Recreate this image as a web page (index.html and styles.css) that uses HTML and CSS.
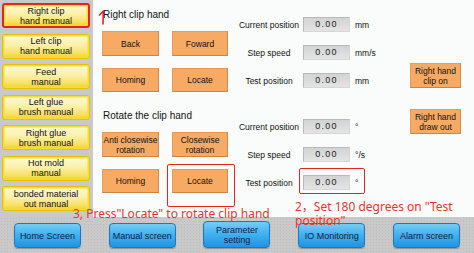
FILE: index.html
```html
<!DOCTYPE html>
<html>
<head>
<meta charset="utf-8">
<link rel="stylesheet" href="styles.css">
</head>
<body>
<div class="screen">
  <div class="top">
    <nav class="side">
      <div class="sbtn active">Right clip<br>hand manual</div>
      <div class="sbtn">Left clip<br>hand manual</div>
      <div class="sbtn">Feed<br>manual</div>
      <div class="sbtn">Left glue<br>brush manual</div>
      <div class="sbtn">Right glue<br>brush manual</div>
      <div class="sbtn">Hot mold<br>manual</div>
      <div class="sbtn">bonded material<br>out manual</div>
    </nav>
    <main class="main">
      <div class="col-ops">
        <div class="sec-title">Right clip hand</div>
        <div class="ops">
          <div class="obtn">Back</div>
          <div class="obtn">Foward</div>
          <div class="obtn">Homing</div>
          <div class="obtn">Locate</div>
        </div>
        <div class="sec-title">Rotate the clip hand</div>
        <div class="ops">
          <div class="obtn">Anti closewise<br>rotation</div>
          <div class="obtn">Closewise<br>rotation</div>
          <div class="obtn">Homing</div>
          <div class="obtn">Locate</div>
        </div>
      </div>
      <div class="col-fields">
        <div class="group g1">
          <div class="frow"><span class="lbl">Current position</span><span class="val">0.00</span><span class="unit">mm</span></div>
          <div class="frow"><span class="lbl">Step speed</span><span class="val">0.00</span><span class="unit">mm/s</span></div>
          <div class="frow"><span class="lbl">Test position</span><span class="val">0.00</span><span class="unit">mm</span></div>
        </div>
        <div class="group g2">
          <div class="frow"><span class="lbl">Current position</span><span class="val">0.00</span><span class="unit">°</span></div>
          <div class="frow"><span class="lbl">Step speed</span><span class="val">0.00</span><span class="unit">°/s</span></div>
          <div class="frow"><span class="lbl">Test position</span><span class="val">0.00</span><span class="unit">°</span></div>
        </div>
      </div>
      <div class="col-side">
        <div class="obtn small">Right hand<br>clip on</div>
        <div class="obtn small">Right hand<br>draw out</div>
      </div>
    </main>
  </div>
  <footer class="tabs">
    <div class="tab"><div class="bbtn">Home Screen</div></div>
    <div class="tab"><div class="bbtn">Manual screen</div></div>
    <div class="tab"><div class="bbtn tall">Parameter<br>setting</div></div>
    <div class="tab"><div class="bbtn">IO Monitoring</div></div>
    <div class="tab"><div class="bbtn">Alarm screen</div></div>
  </footer>

  <svg class="mark1" width="10" height="16" viewBox="0 0 10 16">
    <path d="M5 15 L5.3 2 L1.5 6" fill="none" stroke="#e52222" stroke-width="1.6" stroke-linecap="round" stroke-linejoin="round"/>
  </svg>
  <div class="rbox rb-locate"></div>
  <div class="rbox rb-test"></div>
  <div class="note n3">3, Press"Locate" to rotate clip hand</div>
  <div class="note n2">2，Set 180 degrees on "Test<br>position"</div>
</div>
</body>
</html>
```
FILE: styles.css
```css
html, body {
  margin: 0;
  padding: 0;
}
body {
  font-family: "Liberation Sans", Arial, sans-serif;
  color: #111;
  background: #fafcfb;
}
.screen {
  position: relative;
  width: 474px;
  height: 253px;
  overflow: hidden;
}
.top {
  display: flex;
  height: 217px;
}
.side {
  width: 93px;
  flex: none;
  background: #c9c9c9;
  padding: 3px 0 0 2px;
  box-sizing: border-box;
  display: flex;
  flex-direction: column;
  gap: 5.5px;
}
.sbtn {
  width: 88px;
  height: 25px;
  box-sizing: border-box;
  border-radius: 3px;
  border: 1px solid #e3c200;
  background: linear-gradient(#fdf9d8 0%, #fbf0a8 45%, #f7e165 80%, #f1cf12 100%);
  box-shadow: inset 0 0 0 1.5px #f6dc3a;
  font-size: 9px;
  line-height: 10px;
  text-align: center;
  display: flex;
  align-items: center;
  justify-content: center;
  color: #111;
}
.sbtn.active {
  border: 2px solid #e3261c;
}
.main {
  flex: 1;
  display: flex;
  background: #fafcfb;
}
.col-ops {
  margin-left: 9px;
  padding-top: 9px;
  width: 126px;
  flex: none;
}
.sec-title {
  font-size: 10px;
  line-height: 12px;
  height: 12px;
  margin-left: 1px;
  color: #111;
}
.ops {
  margin-top: 10px;
  display: grid;
  grid-template-columns: 57px 56px;
  grid-template-rows: 25px 24px;
  column-gap: 13px;
  row-gap: 12px;
  margin-bottom: 18px;
}
.obtn {
  background: #f7aa63;
  border: 1px solid #e9995a;
  border-bottom-color: #c98448;
  border-right-color: #cf8a4c;
  box-sizing: border-box;
  font-size: 8.5px;
  line-height: 10px;
  text-align: center;
  display: flex;
  align-items: center;
  justify-content: center;
  color: #111;
}
.col-fields {
  margin-left: 9px;
  width: 169px;
  flex: none;
}
.group {
  display: flex;
  flex-direction: column;
  gap: 13px;
}
.g1 { padding-top: 17px; }
.g2 { margin-top: 31px; }
.frow {
  display: flex;
  align-items: center;
  height: 15px;
}
.lbl {
  width: 64px;
  text-align: center;
  font-size: 8.5px;
  white-space: nowrap;
}
.val {
  margin-left: 2px;
  width: 47px;
  height: 15px;
  box-sizing: border-box;
  border: 1px solid #b9b9b9;
  border-right-color: #d6d6d6;
  border-bottom-color: #d6d6d6;
  background: linear-gradient(#d3d3d3, #e4e4e4);
  font-size: 9px;
  letter-spacing: 1.3px;
  line-height: 13px;
  text-align: center;
  color: #222;
}
.unit {
  margin-left: 5px;
  font-size: 8.5px;
}
.col-side {
  margin-left: 4px;
  padding-top: 63px;
  display: flex;
  flex-direction: column;
  gap: 21px;
}
.obtn.small {
  width: 51px;
  height: 25px;
  font-size: 8.5px;
}
.tabs {
  height: 36px;
  background-color: #c9c9c9;
  background-image: radial-gradient(#bdbdbd 0.6px, transparent 0.8px);
  background-size: 3px 3px;
  display: grid;
  grid-template-columns: repeat(5, 1fr);
  align-items: start;
}
.tab {
  display: flex;
  justify-content: center;
  padding-top: 6px;
}
.bbtn {
  width: 67px;
  height: 25px;
  box-sizing: border-box;
  border-radius: 4px;
  border: 1px solid #1f76bd;
  background: linear-gradient(#74cdf6 0%, #43b2ef 45%, #2094e2 100%);
  box-shadow: 0 1px 1px rgba(0,0,0,0.25);
  font-size: 9px;
  line-height: 10px;
  color: #0d1d45;
  text-align: center;
  display: flex;
  align-items: center;
  justify-content: center;
}
.bbtn.tall {
  height: 27px;
  margin-top: -2px;
}
.mark1 {
  position: absolute;
  left: 98px;
  top: 9px;
}
.rbox {
  position: absolute;
  border: 1.5px solid #e3261c;
  border-radius: 2px;
  box-sizing: border-box;
}
.rb-locate {
  left: 167px;
  top: 164px;
  width: 68px;
  height: 43px;
}
.rb-test {
  left: 299px;
  top: 168px;
  width: 66px;
  height: 26px;
}
.note {
  position: absolute;
  font-family: "Noto Sans", "Noto Sans CJK SC", sans-serif;
  font-size: 12px;
  line-height: 14px;
  color: #e8352e;
  white-space: nowrap;
}
.n3 {
  left: 73px;
  top: 207px;
}
.n2 {
  left: 295px;
  top: 200px;
}
```
